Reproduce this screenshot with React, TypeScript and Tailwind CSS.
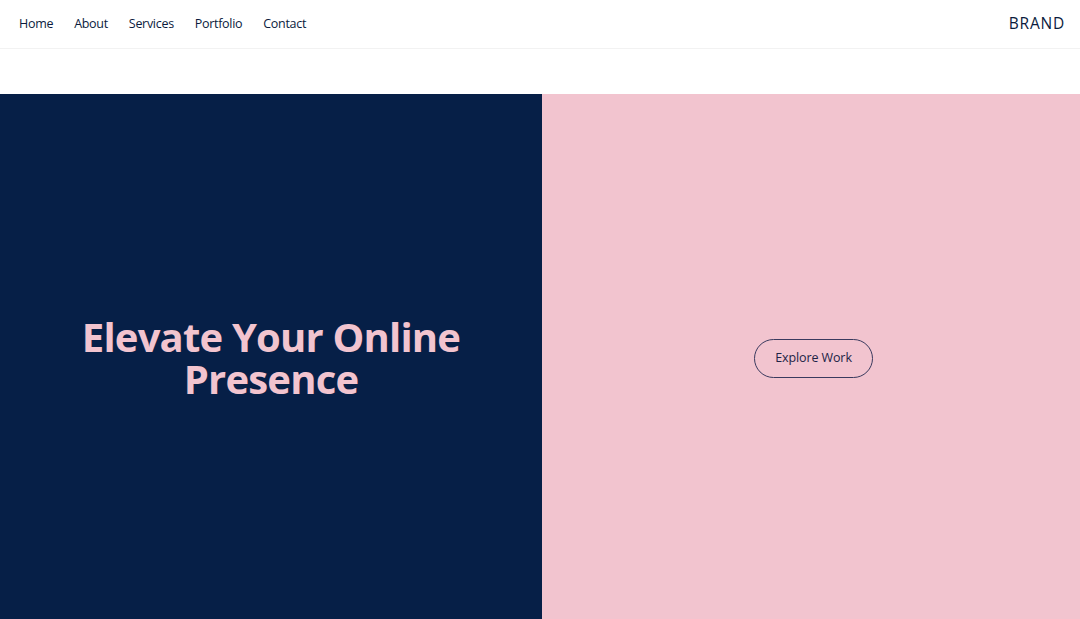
import React from 'react';

const NAV = ['Home', 'About', 'Services', 'Portfolio', 'Contact'];

export default function App() {
  return (
    <div className="min-h-screen bg-white text-[#0b1b3d]" style={{ fontFamily: '"Open Sans", "Noto Sans", sans-serif' }}>
      <header className="h-[49px] flex items-center justify-between pl-[19px] pr-[15px] border-b border-[#f2f2f2]">
        <nav className="flex items-center gap-[21px] text-[12.5px] tracking-[-0.3px] font-medium">
          {NAV.map((item) => (
            <a key={item} href="#" className="hover:text-[#f2c4cf]">
              {item}
            </a>
          ))}
        </nav>
        <div className="text-[15.5px] tracking-[0.05em] font-medium">BRAND</div>
      </header>

      <div className="h-[45px]" />

      <section className="grid grid-cols-[542px_1fr] h-[528px]">
        <div className="bg-[#061f47] flex items-center justify-center">
          <h1 className="text-[40px] font-bold leading-[42px] text-center text-[#f2c4cf] tracking-[-0.02em]">
            Elevate Your Online
            <br />
            Presence
          </h1>
        </div>
        <div className="bg-[#f2c4cf] flex items-center justify-center pl-[5px]">
          <button className="h-[39px] px-[20px] rounded-full border border-[#3a3a5e] text-[12.5px] tracking-[-0.1px] text-[#1d2346]">
            Explore Work
          </button>
        </div>
      </section>
    </div>
  );
}
